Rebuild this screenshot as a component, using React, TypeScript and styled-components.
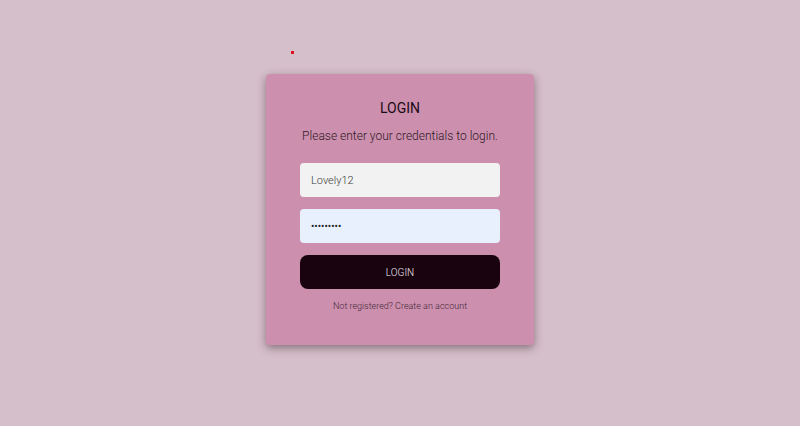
import React from 'react';
import styled, { createGlobalStyle } from 'styled-components';

const GlobalStyle = createGlobalStyle`
  html, body {
    margin: 0;
    padding: 0;
    background: #d5bfca;
    font-family: Roboto, 'Liberation Sans', sans-serif;
  }
`;

const Page = styled.div`
  position: relative;
  width: 100%;
  min-height: 426px;
  display: flex;
  justify-content: center;
  align-items: flex-start;
  padding-top: 74px;
  box-sizing: border-box;
`;

const Dot = styled.span`
  position: absolute;
  left: 291px;
  top: 51px;
  width: 3px;
  height: 3px;
  background: #e0101e;
`;

const Card = styled.form`
  width: 268px;
  box-sizing: border-box;
  padding: 26px 34px 34px;
  background: #cd8fae;
  border-radius: 4px;
  box-shadow: 0 3px 8px rgba(40, 20, 30, 0.45);
  display: flex;
  flex-direction: column;
  align-items: stretch;
`;

const Title = styled.h2`
  margin: 0;
  font-size: 14px;
  font-weight: 400;
  color: #1a0c14;
  text-align: center;
`;

const Subtitle = styled.p`
  margin: 13px 0 20px;
  font-size: 12px;
  font-weight: 300;
  color: #2e1a26;
  text-align: center;
  white-space: nowrap;
`;

const Field = styled.input<{ $autofill?: boolean }>`
  height: 34px;
  box-sizing: border-box;
  border: none;
  border-radius: 4px;
  padding: 0 11px;
  margin-bottom: 12px;
  font-family: Roboto, 'Liberation Sans', sans-serif;
  font-size: ${p => (p.$autofill ? '10px' : '11px')};
  font-weight: ${p => (p.$autofill ? 400 : 300)};
  color: ${p => (p.$autofill ? '#222' : '#3a3a3a')};
  background: ${p => (p.$autofill ? '#e8f0fe' : '#f2f2f2')};
  outline: none;
`;

const Button = styled.button`
  height: 34px;
  border: none;
  border-radius: 8px;
  background: #18030f;
  color: #efe4ea;
  font-family: Roboto, 'Liberation Sans', sans-serif;
  font-size: 10px;
  font-weight: 300;
  cursor: pointer;
`;

const Note = styled.p`
  margin: 12px 0 0;
  font-size: 9px;
  font-weight: 300;
  color: #432836;
  text-align: center;
`;

const App: React.FC = () => {
    return (
        <>
            <GlobalStyle />
            <Page>
                <Dot />
                <Card onSubmit={e => e.preventDefault()}>
                    <Title>LOGIN</Title>
                    <Subtitle>Please enter your credentials to login.</Subtitle>
                    <Field type="text" defaultValue="Lovely12" />
                    <Field type="password" defaultValue="123456789" $autofill />
                    <Button type="submit">LOGIN</Button>
                    <Note>Not registered? Create an account</Note>
                </Card>
            </Page>
        </>
    );
};

export default App;
